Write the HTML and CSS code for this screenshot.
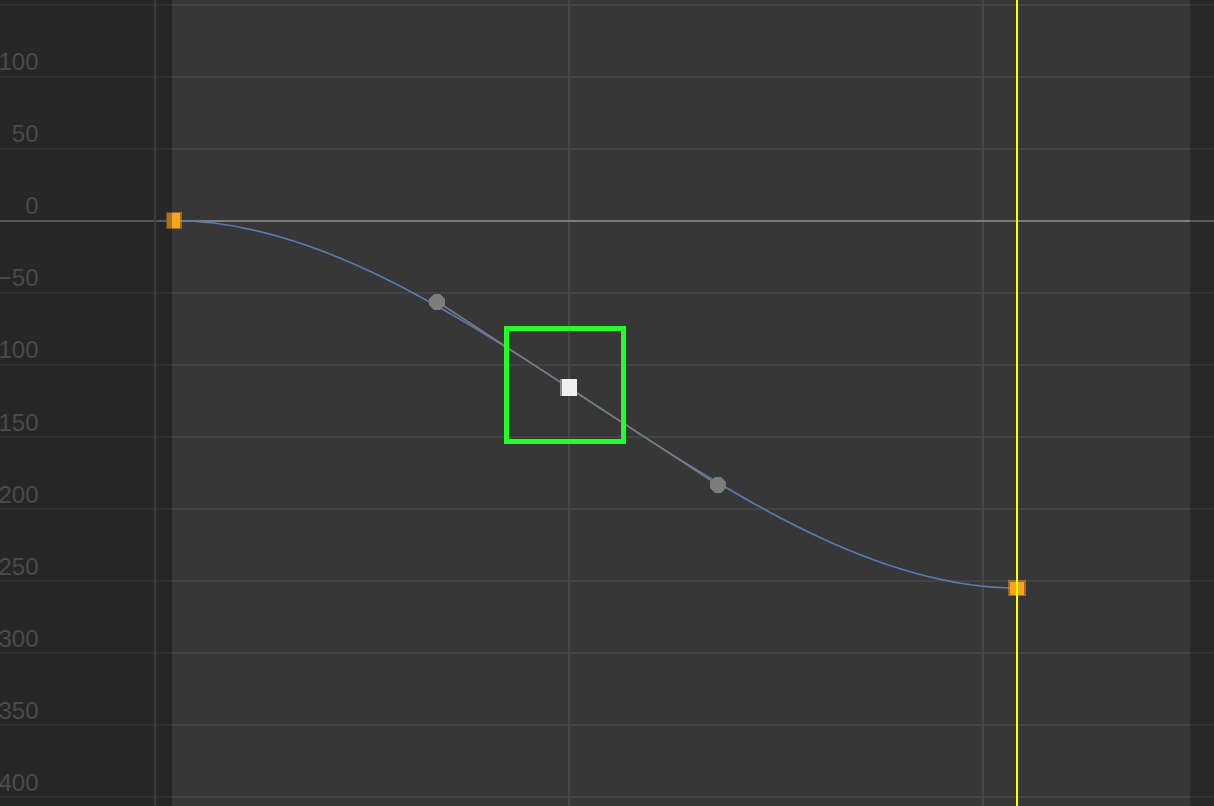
FILE: index.html
```html
<!DOCTYPE html>
<html lang="en">
<head>
<meta charset="utf-8">
<title>Graph Editor</title>
<link rel="stylesheet" href="styles.css">
</head>
<body>
<div class="graph-editor">
  <svg class="graph-canvas" width="1214" height="806" viewBox="0 0 1214 806" xmlns="http://www.w3.org/2000/svg">
    <!-- horizontal grid -->
    <g class="grid-h">
      <rect x="0" y="4" width="1214" height="2"/>
      <rect x="0" y="76" width="1214" height="2"/>
      <rect x="0" y="148" width="1214" height="2"/>
      <rect x="0" y="292" width="1214" height="2"/>
      <rect x="0" y="364" width="1214" height="2"/>
      <rect x="0" y="436" width="1214" height="2"/>
      <rect x="0" y="508" width="1214" height="2"/>
      <rect x="0" y="580" width="1214" height="2"/>
      <rect x="0" y="652" width="1214" height="2"/>
      <rect x="0" y="724" width="1214" height="2"/>
      <rect x="0" y="796" width="1214" height="2"/>
    </g>
    <!-- vertical grid -->
    <g class="grid-v">
      <rect x="568" y="0" width="2" height="806"/>
      <rect x="982" y="0" width="2" height="806"/>
    </g>
    <rect class="zero-line" x="0" y="220" width="1214" height="2"/>

    <!-- curve -->
    <path class="curve" d="M173.5 220.5 C 305 220.5, 437 301.5, 568.5 387.5 C 718 485, 867.5 588, 1017 588"/>
    <line class="tangent" x1="437" y1="301.5" x2="718" y2="485"/>
    <polygon class="handle" points="434,294 440,294 445,299 445,305 440,310 434,310 429,305 429,299"/>
    <polygon class="handle" points="715,477 721,477 726,482 726,488 721,493 715,493 710,488 710,482"/>

    <!-- keyframes -->
    <rect class="key-ring" x="166" y="212" width="16" height="17"/>
    <rect class="key" x="167" y="213" width="13" height="15"/>
    <rect class="key-ring" x="1008" y="580" width="18" height="16"/>
    <rect class="key" x="1010" y="582" width="14" height="13"/>

    <!-- selected point -->
    <rect class="point-shade" x="560" y="379" width="17" height="17"/>
    <rect class="point" x="562" y="379" width="15" height="17"/>
    <rect class="selection" x="506.5" y="328.5" width="117" height="113"/>

    <!-- out of range shading -->
    <rect class="dim-left" x="0" y="0" width="172" height="806"/>
    <rect class="dim-right" x="1190" y="0" width="24" height="806"/>
    <rect class="ruler-edge" x="154" y="0" width="2" height="806"/>

    <!-- axis labels -->
    <g class="axis-labels">
      <text x="38.5" y="70">100</text>
      <text x="38.5" y="142">50</text>
      <text x="38.5" y="214">0</text>
      <text x="38.5" y="286">−50</text>
      <text x="38.5" y="358">−100</text>
      <text x="38.5" y="431">−150</text>
      <text x="38.5" y="503">−200</text>
      <text x="38.5" y="575">−250</text>
      <text x="38.5" y="647">−300</text>
      <text x="38.5" y="719">−350</text>
      <text x="38.5" y="791">−400</text>
    </g>

    <!-- playhead -->
    <rect class="playhead" x="1016" y="0" width="2" height="806"/>
  </svg>
</div>
</body>
</html>
```
FILE: styles.css
```css
html, body {
  margin: 0;
  padding: 0;
  background: #373737;
  overflow: hidden;
}

.graph-editor {
  width: 1214px;
  height: 806px;
  background: #373737;
  position: relative;
  overflow: hidden;
}

.graph-canvas {
  display: block;
}

.grid-h rect {
  fill: #434343;
}

.grid-v rect {
  fill: #484848;
}

.zero-line {
  fill: #7c7c7c;
}

.curve {
  fill: none;
  stroke: #5b7bb3;
  stroke-width: 1.6;
}

.tangent {
  stroke: #7a7a7a;
  stroke-width: 1.6;
}

.handle {
  fill: #7d7d7d;
}

.key-ring {
  fill: rgba(247, 160, 28, 0.5);
}

.key {
  fill: #f9a41d;
}

.point-shade {
  fill: #8a8a8a;
}

.point {
  fill: #f0f0f0;
}

.selection {
  fill: none;
  stroke: #26fc2a;
  stroke-width: 5;
}

.dim-left {
  fill: rgba(0, 0, 0, 0.31);
}

.dim-right {
  fill: rgba(0, 0, 0, 0.27);
}

.ruler-edge {
  fill: #3b3b3b;
}

.axis-labels text {
  font-family: "Liberation Sans", Arial, sans-serif;
  font-size: 24px;
  fill: #4b4b4b;
  text-anchor: end;
}

.playhead {
  fill: #ffff00;
}
```
